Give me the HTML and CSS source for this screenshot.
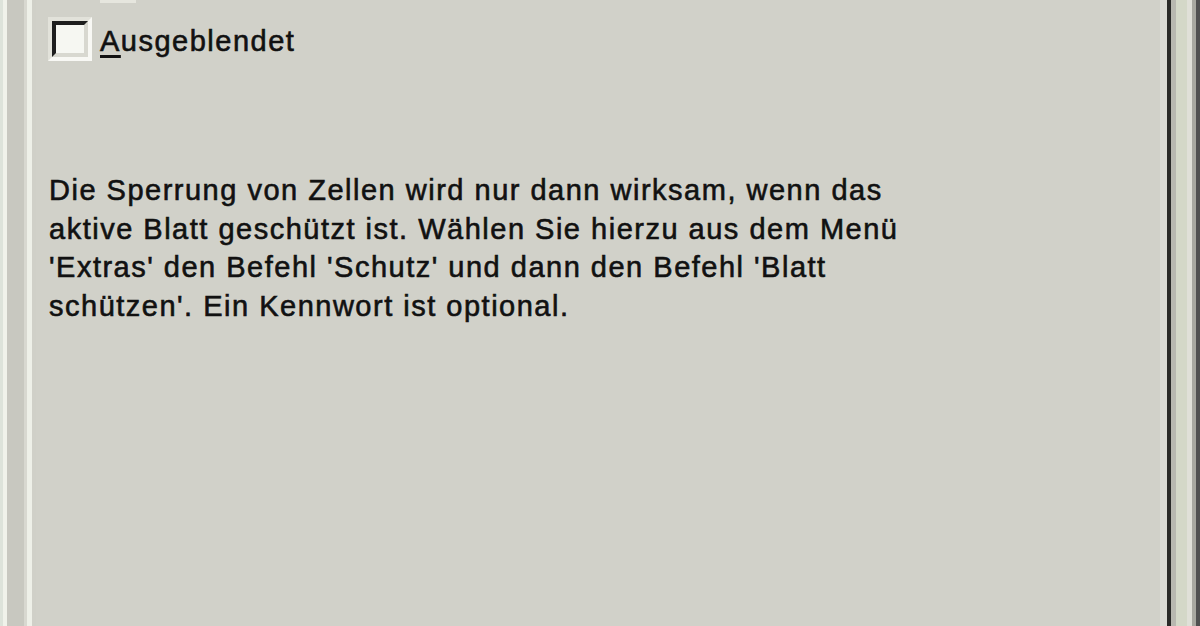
FILE: index.html
```html
<!DOCTYPE html>
<html lang="de">
<head>
<meta charset="utf-8">
<title>Zellen formatieren – Schutz</title>
<link rel="stylesheet" href="styles.css">
</head>
<body>
<div class="dialog">
  <div class="frame-left"></div>
  <div class="content">
    <div class="top-hint"></div>
    <label class="check-row">
      <span class="checkbox"><span class="checkbox-inner"></span></span>
      <span class="check-label"><u>A</u>usgeblendet</span>
    </label>
    <p class="info">Die Sperrung von Zellen wird nur dann wirksam, wenn das<br>aktive Blatt geschützt ist. Wählen Sie hierzu aus dem Menü<br>'Extras' den Befehl 'Schutz' und dann den Befehl 'Blatt<br>schützen'. Ein Kennwort ist optional.</p>
  </div>
  <div class="frame-right"></div>
</div>
</body>
</html>
```

FILE: styles.css
```css
html, body {
  margin: 0;
  padding: 0;
  width: 1200px;
  height: 626px;
  overflow: hidden;
  background: #d1d1c9;
}

.dialog {
  display: flex;
  width: 1200px;
  height: 626px;
  font-family: "Liberation Sans", Arial, sans-serif;
  color: #111;
}

.frame-left {
  width: 36px;
  flex: none;
  background: linear-gradient(to right,
    #dde3da 0 3px,
    #f0f2ea 3px 7px,
    #c8c8c0 7px 24px,
    #d8d8d0 24px 27px,
    #eef0e8 27px 32px,
    #d0d0c8 32px 36px);
}

.frame-right {
  width: 40px;
  flex: none;
  background: linear-gradient(to right,
    #dadad4 0 7px,
    #2a2a28 7px 11px,
    #b8b8b0 11px 16px,
    #d4d8c8 16px 27px,
    #e0e0d8 27px 32px,
    #a8a8a0 32px 36px,
    #505050 36px 40px);
}

.content {
  flex: 1;
  display: flex;
  flex-direction: column;
  padding-left: 12px;
}

.top-hint {
  height: 3px;
  width: 36px;
  margin-left: 52px;
  background: #e6e6de;
}

.check-row {
  display: flex;
  align-items: center;
  gap: 8px;
  margin-top: 14px;
  height: 44px;
}

.checkbox {
  box-sizing: border-box;
  width: 44px;
  height: 44px;
  border: 4px solid;
  border-color: #e2e2da #f8f8f4 #f8f8f4 #e2e2da;
  display: flex;
}

.checkbox-inner {
  flex: 1;
  border: 4px solid;
  border-color: #1e1e1e #d8d8d0 #d8d8d0 #1e1e1e;
  background: #f6f7f2;
}

.check-label {
  font-size: 29px;
  line-height: 38.5px;
  padding-top: 4px;
  letter-spacing: 1.5px;
  -webkit-text-stroke: 0.6px #111;
}

.check-label u {
  text-decoration-thickness: 3px;
  text-underline-offset: 4px;
}

.info {
  margin: 110px 0 0 1px;
  font-size: 29px;
  line-height: 38.5px;
  letter-spacing: 1.5px;
  -webkit-text-stroke: 0.6px #111;
}
```
